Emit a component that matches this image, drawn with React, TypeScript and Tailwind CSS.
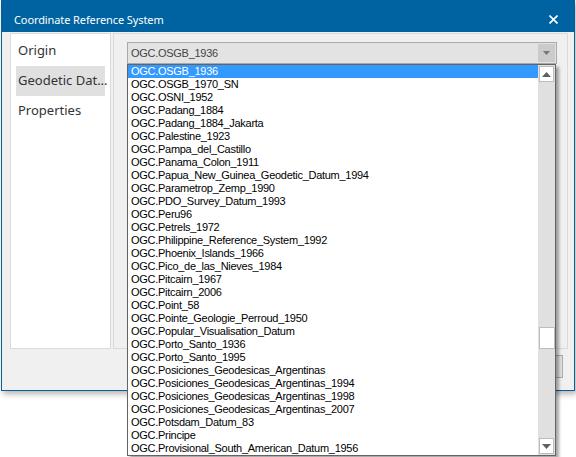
import React from "react";

const items = [
  "OGC.OSGB_1936",
  "OGC.OSGB_1970_SN",
  "OGC.OSNI_1952",
  "OGC.Padang_1884",
  "OGC.Padang_1884_Jakarta",
  "OGC.Palestine_1923",
  "OGC.Pampa_del_Castillo",
  "OGC.Panama_Colon_1911",
  "OGC.Papua_New_Guinea_Geodetic_Datum_1994",
  "OGC.Parametrop_Zemp_1990",
  "OGC.PDO_Survey_Datum_1993",
  "OGC.Peru96",
  "OGC.Petrels_1972",
  "OGC.Philippine_Reference_System_1992",
  "OGC.Phoenix_Islands_1966",
  "OGC.Pico_de_las_Nieves_1984",
  "OGC.Pitcairn_1967",
  "OGC.Pitcairn_2006",
  "OGC.Point_58",
  "OGC.Pointe_Geologie_Perroud_1950",
  "OGC.Popular_Visualisation_Datum",
  "OGC.Porto_Santo_1936",
  "OGC.Porto_Santo_1995",
  "OGC.Posiciones_Geodesicas_Argentinas",
  "OGC.Posiciones_Geodesicas_Argentinas_1994",
  "OGC.Posiciones_Geodesicas_Argentinas_1998",
  "OGC.Posiciones_Geodesicas_Argentinas_2007",
  "OGC.Potsdam_Datum_83",
  "OGC.Principe",
  "OGC.Provisional_South_American_Datum_1956",
];

function TriUp() {
  return (
    <svg width="9" height="5" viewBox="0 0 9 5">
      <polygon points="0,5 9,5 4.5,0" fill="#606060" />
    </svg>
  );
}
function TriDown({ c = "#606060", w = 9, h = 5 }: { c?: string; w?: number; h?: number }) {
  return (
    <svg width={w} height={h} viewBox={`0 0 ${w} ${h}`}>
      <polygon points={`0,0 ${w},0 ${w / 2},${h}`} fill={c} />
    </svg>
  );
}

export default function App() {
  return (
    <div className="relative w-[576px] h-[457px] bg-white overflow-hidden">
      <div className="ml-[1px] w-[574px] h-[391px] border border-[#0a5f97] border-t-0 flex flex-col shadow-[2px_3px_6px_rgba(0,0,0,0.3)]">
        <div className="h-[32px] bg-[#0063a1] flex items-center justify-between pl-[12px] pr-[16px] pt-[7px] shrink-0">
          <span className="text-white text-[11px] tracking-[-0.1px] leading-none" style={{ fontFamily: '"Noto Sans", sans-serif' }}>
            Coordinate Reference System
          </span>
          <svg width="9" height="9" viewBox="0 0 9 9">
            <path d="M0.5 0.5 L8.5 8.5 M8.5 0.5 L0.5 8.5" stroke="white" strokeWidth="1.6" />
          </svg>
        </div>
        <div className="flex-1 bg-[#f0f0f0] flex flex-col pl-[8px] pr-[6px] pt-[1px]">
          <div className="flex gap-[2px] h-[316px]">
            <div className="w-[101px] bg-white border border-[#dadada] pt-[2px] px-[5px]" style={{ fontFamily: '"Noto Sans", sans-serif' }}>
              <div className="h-[30px] flex items-center pl-[2px] text-[13px] text-[#333]">Origin</div>
              <div className="h-[30px] flex items-center pl-[2px] text-[13px] text-[#333] bg-[#e0e0e0] whitespace-nowrap">Geodetic Dat...</div>
              <div className="h-[30px] flex items-center pl-[2px] text-[13px] text-[#333]">Properties</div>
            </div>
            <div className="flex-1 bg-[#f0f0f0] border border-[#dadada] pt-[8px] pl-[13px] pr-[10px]">
              <div className="h-[22px] border border-[#a9a9a9] bg-[#e3e3e3] flex items-center justify-between pl-[3px] pr-[1px]">
                <span className="text-[11px] tracking-[-0.28px] text-[#444]" style={{ fontFamily: '"Liberation Sans", Arial, sans-serif' }}>OGC.OSGB_1936</span>
                <div className="w-[17px] h-[18px] bg-[#cbcbcb] flex items-center justify-center">
                  <TriDown c="#777" w={7} h={4} />
                </div>
              </div>
            </div>
          </div>
          <div className="flex justify-end gap-[8px] pt-[6px] pr-[5px]">
            <div className="w-[75px] h-[23px] border border-[#adadad] bg-[#e1e1e1]"></div>
            <div className="w-[75px] h-[23px] border border-[#adadad] bg-[#e1e1e1]"></div>
          </div>
        </div>
      </div>

      <div
        className="absolute left-[127px] top-[64px] w-[429px] h-[392px] bg-white border border-[#646464] shadow-[3px_3px_3px_rgba(0,0,0,0.35)] flex"
        style={{ fontFamily: '"Liberation Sans", Arial, sans-serif' }}
      >
        <div className="flex-1 flex flex-col">
          {items.map((it, i) => (
            <div
              key={it}
              className={
                i === 0
                  ? "h-[13px] leading-[13px] text-[11px] tracking-[-0.28px] pl-[3px] bg-[#3399ff] text-white whitespace-nowrap"
                  : "h-[13px] leading-[13px] text-[11px] tracking-[-0.28px] pl-[3px] text-black whitespace-nowrap"
              }
            >
              {it}
            </div>
          ))}
        </div>
        <div className="w-[17px] bg-[#e0e0e0] flex flex-col justify-between py-[1px]">
          <div className="h-[16px] mx-[1px] bg-white border border-[#bdbdbd] flex items-center justify-center">
            <TriUp />
          </div>
          <div className="flex-1 relative">
            <div className="absolute left-[1px] right-[0px] top-[245px] h-[22px] bg-white border border-[#bdbdbd]"></div>
          </div>
          <div className="h-[16px] mx-[1px] bg-white border border-[#bdbdbd] flex items-center justify-center">
            <TriDown />
          </div>
        </div>
      </div>
    </div>
  );
}
